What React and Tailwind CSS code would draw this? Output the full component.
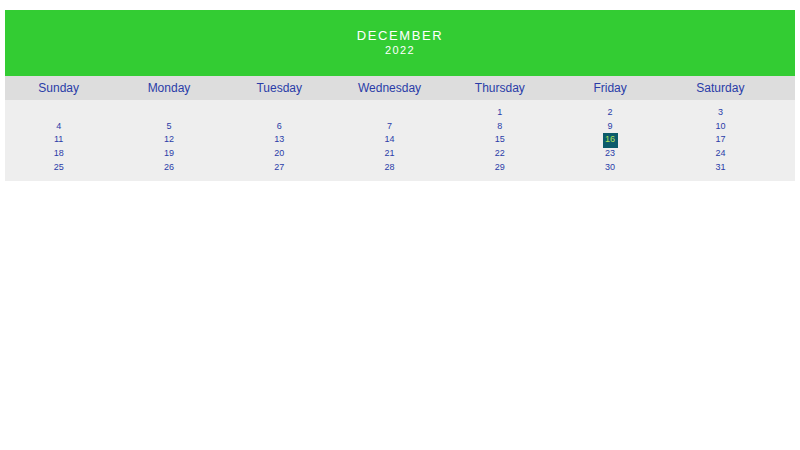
export default function App() {
  const cells = [];
  for (let i = 0; i < 4; i++) cells.push(null);
  for (let d = 1; d <= 31; d++) cells.push(d);
  const days = ["Sunday", "Monday", "Tuesday", "Wednesday", "Thursday", "Friday", "Saturday"];
  return (
    <div className="w-[800px] h-[450px] bg-white px-[5px] pt-[10px]" style={{ fontFamily: '"Liberation Sans", Arial, sans-serif' }}>
      <div className="bg-[#33cc33] h-[66px] flex flex-col items-center pt-[17.5px] text-white">
        <div className="text-[13px] tracking-[1.6px] leading-[15px]">DECEMBER</div>
        <div className="text-[11px] tracking-[1.4px] leading-[15px]">2022</div>
      </div>
      <div className="bg-[#dddddd] h-[24px] grid grid-cols-[repeat(7,107.4px)] gap-x-[2.9px] items-center">
        {days.map((d) => (
          <div key={d} className="text-center text-[12px] text-[#2a3ca8]">{d}</div>
        ))}
      </div>
      <div className="bg-[#eeeeee] pt-[6px] pb-[6.5px] grid grid-cols-[repeat(7,107.4px)] gap-x-[2.9px]">
        {cells.map((d, i) => (
          <div key={i} className="text-center text-[9px] leading-[13.7px] h-[13.7px] text-[#2a3ca8] flex items-center justify-center">
            {d === 16 ? (
              <span className="bg-[#0b5b6b] text-[#b4e35a] w-[15px] h-[15px] flex items-center justify-center">16</span>
            ) : (
              d
            )}
          </div>
        ))}
      </div>
    </div>
  );
}
